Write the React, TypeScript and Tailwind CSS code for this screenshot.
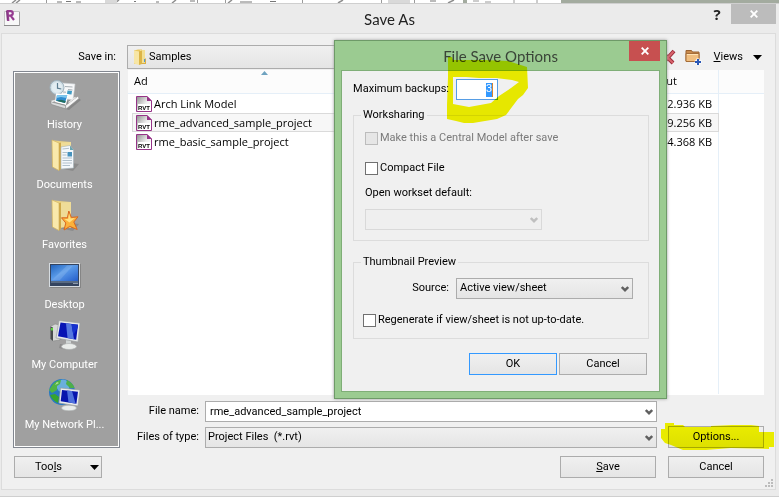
import type { ReactNode } from "react";

const files = [
    { name: "Arch Link Model", size: "12.936 KB", selected: false },
    { name: "rme_advanced_sample_project", size: "29.256 KB", selected: true },
    { name: "rme_basic_sample_project", size: "24.368 KB", selected: false },
];

const buttonClass =
    "h-[22px] border border-[#acacac] bg-linear-to-b from-[#f0f0f0] to-[#e5e5e5] text-center";

function Chevron({ color = "#606060" }: { color?: string }) {
    return (
        <svg className="pointer-events-none absolute right-1 top-[7px] h-2 w-2" viewBox="0 0 8 8">
            <path d="M0.8 2 L4 5.2 L7.2 2" fill="none" stroke={color} strokeWidth="2.4" />
        </svg>
    );
}

function Cross() {
    return (
        <svg className="h-2 w-2" viewBox="0 0 8 8">
            <path d="M0.7 0.7 L7.3 7.3 M7.3 0.7 L0.7 7.3" stroke="#fff" strokeWidth="1.9" />
        </svg>
    );
}

function DownTriangle() {
    return (
        <svg className="h-[5px] w-[9px]" viewBox="0 0 9 5">
            <path d="M0 0 H9 L4.5 5 Z" fill="#000" />
        </svg>
    );
}

// Revit logo on a small sheet
function RevitIcon() {
    return (
        <svg className="h-[18px] w-[17px]" viewBox="0 0 17 18">
            <path d="M0.5 2.5 H15.5 V16.5 H0.5 Z" fill="#f8f8f8" stroke="#c4c4c4" />
            <path d="M0 16.5 H16" stroke="#8c8c8c" />
            <path d="M15.5 3 V17" stroke="#a5a5a5" />
            <path
                d="M4.3 12 L3.6 2.2 H6.4 C9.4 2 9.6 6 6.8 6.4 L4.8 6.6 M6.6 6.6 L10 11"
                fill="none"
                stroke="#963c91"
                strokeWidth="2.2"
            />
            <path d="M2.5 2 L3.3 11.5" stroke="#6f2a6e" strokeWidth="0.8" />
        </svg>
    );
}

function RvtIcon() {
    return (
        <svg className="h-4 w-4 shrink-0" viewBox="0 0 16 16">
            <defs>
                <linearGradient id="sheet" x1="0" y1="0" x2="1" y2="0.8">
                    <stop offset="0" stopColor="#8c8c8c" />
                    <stop offset="0.6" stopColor="#efefef" />
                    <stop offset="1" stopColor="#fff" />
                </linearGradient>
            </defs>
            <path d="M0.5 0.5 H11 L15.5 5 V15.5 H0.5 Z" fill="url(#sheet)" stroke="#963488" />
            <path d="M11 0 L16 5 H11 Z" fill="#963488" />
            <rect x="2" y="8" width="13" height="7" fill="#fff" />
            <text x="2" y="14" fontFamily="Liberation Sans" fontWeight="bold" fontSize="6" fill="#000">
                RVT
            </text>
        </svg>
    );
}

function SmallFolder() {
    return (
        <svg className="h-4 w-[14px] shrink-0" viewBox="0 0 14 16">
            <path d="M1 1.5 L5 0.5 H9 V15 H1 Z" fill="#e9c860" />
            <path d="M7 1 H12 V14.5 H7 Z" fill="#f2df93" />
            <path d="M1 1.5 L6 2.5 V16 L1 14.5 Z" fill="#f7e6a5" />
            <path d="M6 2.5 L9 1.5 V15 L6 16 Z" fill="#dcb548" />
            <path d="M12 9 L13 10 V15 H9 V14 H12 Z" fill="#d8ae45" />
            <rect x="11" y="10" width="1" height="3" fill="#4f97d8" />
        </svg>
    );
}

function DeleteIcon() {
    return (
        <svg className="h-4 w-4" viewBox="0 0 16 16">
            <path d="M2 3 L13 14 M14 2 L3 14" stroke="#9c2b3a" strokeWidth="4" />
            <path d="M2.5 3.5 L13 14 M13.5 2.5 L3.5 13.5" stroke="#d9646c" strokeWidth="2" />
        </svg>
    );
}

function NewFolderIcon() {
    return (
        <svg className="h-4 w-[17px]" viewBox="0 0 17 16">
            <path d="M1 3 V1.5 H6.5 L7.5 3 H14 V12 H1 Z" fill="#c98a4c" stroke="#9a6230" />
            <path d="M1 4.5 H14 V12.5 H1 Z" fill="#f1bf80" stroke="#a56d38" />
            <path d="M2 5.5 H13" stroke="#ffe2b4" />
            <path d="M13 9.5 V16 M9.8 12.8 H16.5" stroke="#fff" strokeWidth="3.2" />
            <path d="M13 10 V16 M10 13 H16" stroke="#2b58b5" strokeWidth="2" />
        </svg>
    );
}

function FolderShape() {
    return (
        <>
            <path d="M10 29 L24 32 L30 25 L22 24 Z" fill="#7d7d7d" opacity="0.6" />
            <path d="M5 1.5 L16 2.5 L22 3 V29 L7 27 Z" fill="#e8d083" />
            <path d="M11 3.5 L22 3 V27 L11 29 Z" fill="#efdc98" />
            <path d="M3 1 L10 4 V31.5 L3.5 28 Z" fill="#f9e9ab" stroke="#d5b65f" strokeWidth="0.7" />
            <path d="M10 4 L12 3.5 V30 L10 31.5 Z" fill="#cfa94a" />
        </>
    );
}

function HistoryIcon() {
    return (
        <svg className="h-8 w-8" viewBox="0 0 32 32">
            <path d="M8 27 L20 31 L32 21 L28 18 Z" fill="#777" opacity="0.6" />
            <path d="M13 4 L26 5 L24 21 L12 19 Z" fill="#f7f8f9" stroke="#cbd0d3" strokeWidth="0.6" />
            <path d="M16 7.5 L23.5 8 M19 10.5 L23.5 11 M14 13 L17 13.2 M14 15.3 L17 15.5" stroke="#a8b0b5" />
            <path d="M18.5 11.5 L23 12 L22.5 15.5 L18 15 Z" fill="#3f9bc4" />
            <circle cx="8" cy="8.5" r="7" fill="#d2e0e7" stroke="#9fb2bd" />
            <circle cx="8" cy="8.5" r="5.3" fill="#e2edf2" />
            <path d="M8.5 4 V9.2 L12.3 10" fill="none" stroke="#5e7e91" strokeWidth="1.2" />
            <path d="M7 14.5 L19.5 15 L17 26 L6 23 Z" fill="#fff" />
            <path d="M8 16 L18.3 16.3 L16 24 L7 21.8 Z" fill="#2f8bcf" />
            <path d="M8 16 L18.3 16.3 L17.5 19 L12 18 L7.6 19 Z" fill="#81c9ef" />
            <path d="M7 21.8 L12 20.8 L16.8 22 L16 24 Z" fill="#246f5e" />
            <path d="M1 22.5 L16.5 26.5 L17 30 L2.5 25.5 Z" fill="#d9dbdc" stroke="#858585" strokeWidth="0.6" />
            <path d="M16.5 26.5 L29 17 L30 19.5 L17 30 Z" fill="#f6f6f6" stroke="#909090" strokeWidth="0.6" />
            <path d="M2.5 22.5 L6 21.5 M19.5 23.5 L26.5 18.3" stroke="#e8e8e8" strokeWidth="1.4" />
        </svg>
    );
}

function DocumentsIcon() {
    return (
        <svg className="h-8 w-8" viewBox="0 0 32 32">
            <FolderShape />
            <path d="M12 8 L21 6.5 L24.5 11 V29 L12 30 Z" fill="#f4f8fb" stroke="#a5b1b8" strokeWidth="0.6" />
            <path d="M21 6.5 L21 11 H24.5 Z" fill="#6ca5b0" />
            <path d="M13.5 10 L20 9.3 M13.5 13.5 H18 M13.5 16 H17.5 M13.5 19 H23 M13.5 21.5 H23 M13.5 24 H23 M13.5 26.5 H21" stroke="#a9b9c5" strokeWidth="0.9" />
            <rect x="18.5" y="13" width="4.5" height="4.5" fill="#4692bd" />
        </svg>
    );
}

function FavoritesIcon() {
    return (
        <svg className="h-8 w-8" viewBox="0 0 32 32">
            <FolderShape />
            <path
                d="M19.8 12 L22.4 18.4 L29 17.8 L24.8 23 L28.2 30.5 L20.8 27.4 L15 31 L16.8 24 L12.5 18.8 L18.4 18.8 Z"
                fill="#fcb13b"
                stroke="#d86721"
            />
            <path d="M20 14.5 L21.5 19.5 L26 19 L20.5 23.5 L15.5 20 L19.2 20 Z" fill="#ffe183" />
        </svg>
    );
}

function DesktopIcon() {
    return (
        <svg className="h-8 w-8" viewBox="0 0 32 32">
            <defs>
                <linearGradient id="desk" x1="0" y1="0" x2="1" y2="1">
                    <stop offset="0" stopColor="#2264bd" />
                    <stop offset="0.45" stopColor="#5a9be9" />
                    <stop offset="1" stopColor="#245dcb" />
                </linearGradient>
            </defs>
            <rect x="1" y="5" width="31" height="24" fill="#858585" />
            <rect x="0.5" y="4.5" width="30" height="23" fill="#34445f" stroke="#d6dce1" />
            <rect x="2" y="6" width="27" height="16" fill="url(#desk)" />
            <path d="M3 21 L18 6.5 H24 L11 21 Z" fill="#fff" opacity="0.13" />
            <path d="M2 23 H29" stroke="#697b92" strokeWidth="1.4" />
            <path d="M24 24.5 H29" stroke="#8c9aae" />
        </svg>
    );
}

function Monitor() {
    return (
        <>
            <path d="M11 25 L22 26 L25 30 L18 31 L10 29 Z" fill="#777" opacity="0.5" />
            <path d="M17 20 H22 V28 H17 Z" fill="#cfd4d4" />
            <ellipse cx="20" cy="27.5" rx="7.5" ry="3" fill="#e9ecea" stroke="#b0b5b5" strokeWidth="0.7" />
        </>
    );
}

function ComputerIcon() {
    return (
        <svg className="h-8 w-8" viewBox="0 0 32 32">
            <path d="M1.5 7.5 L6 5 L11 6 V21 L4 22 L1.5 20 Z" fill="#d6d8d6" stroke="#888" strokeWidth="0.6" />
            <path d="M1.5 7.5 L4 8.5 V22 L1.5 20 Z" fill="#484b4d" />
            <rect x="2" y="9" width="2" height="2.5" fill="#58d13b" />
            <Monitor />
            <path d="M10 1.5 L31 4 L29 23 L7 19 Z" fill="#e7e9e9" stroke="#9a9fa0" strokeWidth="0.7" />
            <path d="M11.5 3.5 L29 5.7 L27.2 20.7 L9 17.3 Z" fill="#0814b4" />
            <path d="M17 4.2 L22.5 4.9 L25 20.3 L18.5 19.1 Z" fill="#5577e0" />
            <path d="M22.5 4.9 L29 5.7 L28.6 9 L24.3 16 Z" fill="#1632ce" />
        </svg>
    );
}

function NetworkIcon() {
    return (
        <svg className="h-8 w-8" viewBox="0 0 32 32">
            <circle cx="14" cy="13" r="13" fill="#2878c1" />
            <circle cx="15" cy="7" r="6.5" fill="#84c6e6" opacity="0.7" />
            <path d="M5 5 Q9 1 13 1 L12 5 L9 7 L9 11 L4 14 L1 11 Z" fill="#51b345" />
            <path d="M19 1 Q25 4 26.5 9 L22 9 L18 5 Z" fill="#4daf48" />
            <path d="M2 16 L7 15 L11 18 L10 24 Q5 22 2 16 Z" fill="#36a52e" />
            <path d="M7 6 L9 3 L11 4 Z" fill="#b8e498" />
            <ellipse cx="21" cy="29" rx="7.5" ry="2.8" fill="#e9ecea" stroke="#b0b5b5" strokeWidth="0.7" />
            <path d="M12.5 9 L32 11 L30 27 L11 24 Z" fill="#e9ebec" stroke="#9a9fa0" strokeWidth="0.7" />
            <path d="M14 11 L30 12.7 L28.4 24.8 L12.7 22.3 Z" fill="#0715ad" />
            <path d="M19 11.6 L24 12.1 L27.5 24.6 L20.5 23.5 Z" fill="#4d70dc" />
        </svg>
    );
}

const places: { label: string; icon: ReactNode }[] = [
    { label: "History", icon: <HistoryIcon /> },
    { label: "Documents", icon: <DocumentsIcon /> },
    { label: "Favorites", icon: <FavoritesIcon /> },
    { label: "Desktop", icon: <DesktopIcon /> },
    { label: "My Computer", icon: <ComputerIcon /> },
    { label: "My Network Pl...", icon: <NetworkIcon /> },
];

// sliver of the application toolbar behind the window
function ToolbarStrip() {
    return (
        <div className="flex h-[3px] bg-white">
            <svg className="h-[3px] w-[463px]" viewBox="0 0 463 3">
                <path
                    d="M12 3 L16 0 M16 3 L20 0 M115 3 L119 0 M172 3 L176 0 M228 3 L232 0 M338 3 L343 0 M448 3 L454 0"
                    stroke="#8f8f8f"
                    strokeWidth="1.5"
                />
                <path d="M57 2 H62 M66 1.5 H71 M76 2 H81 M134 1.5 H136 M156 2 H159 M190 1 H195 M240 2 H252 M270 1.5 H276 M430 1 H436" stroke="#777" />
                <path d="M105 0 H117 V3 H105 Z M388 0 H410 V3 H388 Z" fill="#d9d9d9" />
                <path d="M46.5 0 V3 M197.5 0 V3 M225.5 0 V3 M302.5 0 V3 M381.5 0 V3 M414.5 0 V3" stroke="#9a9a9a" />
            </svg>
            <div className="w-1 bg-[#a3ab9f]" />
            <svg className="h-[3px] w-[94px]" viewBox="0 0 94 3">
                <path d="M6 1 H12 M18 2 H24 M47 0 V3 M70 0 V3" stroke="#9a9a9a" />
            </svg>
            <div className="flex-1 bg-[#a3ab9f]" />
        </div>
    );
}

function PlacesBar() {
    return (
        <nav className="flex flex-col border border-[#828790] bg-white p-px">
            <div className="flex flex-1 flex-col items-center bg-[#a0a0a0] pr-1 pt-[6px] text-white">
                {places.map((p) => (
                    <a key={p.label} href="#" className="flex h-[60px] flex-col items-center">
                        {p.icon}
                        <span className="mt-[6px] whitespace-nowrap leading-4">{p.label}</span>
                    </a>
                ))}
            </div>
        </nav>
    );
}

function FileList() {
    return (
        <div className="relative h-[325px] bg-white font-['Open_Sans','Noto_Sans',sans-serif]">
            <table className="w-full table-fixed border-separate border-spacing-0">
                <colgroup>
                    <col className="w-1" />
                    <col />
                    <col className="w-[80px]" />
                    <col className="w-[45px]" />
                </colgroup>
                <thead>
                    <tr className="h-6 bg-[#fcfcfc] text-left">
                        <th className="border-b border-[#e5eff8]" />
                        <th className="border-b border-[#e5eff8] pl-[2px] font-normal">Ad</th>
                        <th className="border-b border-r border-[#e5eff8] pl-2 font-normal">Boyut</th>
                        <th className="border-b border-[#e5eff8]" />
                    </tr>
                </thead>
                <tbody>
                    {files.map((f) => (
                        <tr key={f.name} className="h-[19px]">
                            <td />
                            <td className={f.selected ? "border border-r-0 border-[#dadada] bg-[#f7f7f7] p-0 pl-[3px]" : "p-0 pl-1"}>
                                <div className="flex items-center gap-[2px] leading-4">
                                    <RvtIcon />
                                    {f.name}
                                </div>
                            </td>
                            <td
                                className={
                                    f.selected
                                        ? "border border-l-0 border-[#dadada] bg-[#f7f7f7] p-0 pr-1.5 text-right leading-4"
                                        : "border-r border-[#e5eff8] p-0 pr-1.5 text-right leading-4"
                                }
                            >
                                {f.size}
                            </td>
                            <td />
                        </tr>
                    ))}
                    <tr className="h-[243px]">
                        <td />
                        <td />
                        <td className="border-r border-[#e5eff8]" />
                        <td />
                    </tr>
                </tbody>
            </table>
            <svg className="absolute left-[133px] top-px h-1 w-[7px]" viewBox="0 0 7 4">
                <path d="M0 4 L3.5 0 L7 4 Z" fill="#6fa3c0" />
            </svg>
        </div>
    );
}

function SaveOptionsDialog() {
    return (
        <section
            role="dialog"
            aria-labelledby="options-title"
            className="absolute left-[334px] top-10 w-[333px] border border-[#6e9a68] bg-[#9bcb91] px-[6px] pb-[6px] shadow-[0_0_3px_#999]"
        >
            <header className="relative flex h-[29px] items-center justify-center">
                <h2 id="options-title" className="font-['Lato',sans-serif] text-[15px] leading-5 text-[#3a4438]">
                    File Save Options
                </h2>
                <button aria-label="Close options" className="absolute right-0 top-0 flex h-5 w-[31px] items-center justify-center bg-[#c75050]">
                    <Cross />
                </button>
            </header>
            <div className="border border-[#7fae77] bg-[#f0f0f0] pb-4 pl-[11px] pr-[10px] pt-2">
                <div className="flex items-center">
                    <label htmlFor="backups" className="w-24 whitespace-nowrap text-right">
                        Maximum backups:
                    </label>
                    <div className="relative ml-[7px] flex h-[21px] w-[42px] items-center justify-end border border-[#569de5] bg-white pr-1">
                        <input
                            id="backups"
                            defaultValue="3"
                            className="h-[14px] w-[7px] border-r border-[#d9822b] bg-[#3399ff] p-0 text-right text-white outline-none"
                        />
                    </div>
                </div>

                <fieldset className="mt-[7px] h-[134px] border border-[#dcdcdc] px-[11px]">
                    <legend className="-ml-1 px-[2px] leading-4">Worksharing</legend>
                    <label className="mt-2 flex items-center gap-[2px] leading-[14px] text-[#7a7a7a]">
                        <input type="checkbox" disabled className="size-[13px] appearance-none border border-[#bcbcbc] bg-[#e6e6e6]" />
                        Make this a Central Model after save
                    </label>
                    <label className="mt-4 flex items-center gap-[2px] leading-[14px]">
                        <input type="checkbox" className="size-[13px] appearance-none border border-[#707070] bg-white" />
                        Compact File
                    </label>
                    <label htmlFor="workset" className="mt-[10px] block leading-4">
                        Open workset default:
                    </label>
                    <div className="relative mt-2 w-[177px]">
                        <select id="workset" disabled className="block h-[21px] w-full appearance-none border border-[#d9d9d9] bg-[#efefef] px-[3px]" />
                        <Chevron color="#bfbfbf" />
                    </div>
                </fieldset>

                <fieldset className="mt-[13px] h-[85px] border border-[#dcdcdc] px-[9px]">
                    <legend className="-ml-[2px] px-[2px] leading-4">Thumbnail Preview</legend>
                    <div className="mt-2 flex items-center">
                        <label htmlFor="source" className="w-[86px] text-right">
                            Source:
                        </label>
                        <div className="relative ml-[7px] w-[177px]">
                            <select
                                id="source"
                                className="block h-[21px] w-full appearance-none border border-[#acacac] bg-linear-to-b from-[#f0f0f0] to-[#e5e5e5] px-[3px]"
                            >
                                <option>Active view/sheet</option>
                            </select>
                            <Chevron />
                        </div>
                    </div>
                    <label className="mt-[14px] flex items-center gap-[2px] leading-[14px]">
                        <input type="checkbox" className="size-[13px] appearance-none border border-[#707070] bg-white" />
                        Regenerate if view/sheet is not up-to-date.
                    </label>
                </fieldset>

                <div className="mt-[14px] flex justify-end gap-[2px] pr-[2px]">
                    <button className="h-[22px] w-[88px] border border-[#3399ff] bg-linear-to-b from-[#f0f0f0] to-[#e5e5e5]">OK</button>
                    <button className={`${buttonClass} w-[88px]`}>Cancel</button>
                </div>
            </div>
        </section>
    );
}

// yellow felt-pen marks round the backups box and the Options button
function Marker() {
    return (
        <>
            <svg className="pointer-events-none absolute left-[446px] top-[57px] h-[68px] w-[84px] mix-blend-multiply" viewBox="0 0 84 68">
                <path
                    fillRule="evenodd"
                    d="M2 0 L6 0 L7 3 H38 L62 4 L81 10 L82 31 L77 38 L72 42 L60 58 L51 62 L27 66 H18 L10 64 L1 62 V48 L2 20 Z M7 20 V47 L23 50 L45 46 L53 39 L65 31 L73 25 L66 23 L50 21 L33 21 L20 20 Z"
                    fill="#f5f600"
                />
            </svg>
            <svg className="pointer-events-none absolute right-[4px] top-[423px] h-[28px] w-[114px] mix-blend-multiply" viewBox="0 0 114 28">
                <path
                    d="M4 0 H13 V2 H22 L24 4 H50 V3 L71 2 H90 L98 3 V9 H113 V24 H108 V26 L70 25 L45 27 H22 L10 22 L4 20 L0 15 V6 H4 Z"
                    fill="#f8fa00"
                />
            </svg>
        </>
    );
}

export default function App() {
    return (
        <main className="relative w-full bg-white pb-[2px] font-['Roboto',sans-serif] text-[11px] text-black">
            <ToolbarStrip />
            <section className="border-b border-t border-[#cfcfcf] bg-[#ebebeb] px-px pb-[6px]">
                <header className="relative flex h-[29px] items-center justify-center">
                    <span className="absolute left-[3px] top-[5px]">
                        <RevitIcon />
                    </span>
                    <h1 className="font-['Lato',sans-serif] text-[15px] leading-5 text-[#222]">Save As</h1>
                    <div className="absolute right-[2px] top-0 flex">
                        <button aria-label="Help" className="h-5 w-7 font-['Open_Sans',sans-serif] text-[15px] font-bold leading-5 text-[#222]">
                            ?
                        </button>
                        <button aria-label="Close" className="flex h-5 w-[45px] items-center justify-center bg-[#bcbcbc]">
                            <Cross />
                        </button>
                    </div>
                </header>

                <div className="relative mr-[2px] border border-[#dcdcdc] bg-[#f0f0f0] px-[11px] pb-[11px] pt-[11px]">
                    <div className="flex h-6 items-center">
                        <label htmlFor="folder" className="w-[107px] pr-1 text-right">
                            Save in:
                        </label>
                        <div className="relative ml-[7px] flex-1">
                            <span className="pointer-events-none absolute left-[6px] top-1">
                                <SmallFolder />
                            </span>
                            <select
                                id="folder"
                                className="block h-6 w-full appearance-none border border-[#acacac] bg-linear-to-b from-[#f0f0f0] to-[#e5e5e5] pl-[21px]"
                            >
                                <option>Samples</option>
                            </select>
                        </div>
                        <div className="flex w-[180px] items-center justify-end gap-[9px] pr-[2px]">
                            <button aria-label="Delete">
                                <DeleteIcon />
                            </button>
                            <button aria-label="New folder">
                                <NewFolderIcon />
                            </button>
                            <button className="ml-[3px] flex items-center gap-[10px]">
                                <span>
                                    <u>V</u>iews
                                </span>
                                <DownTriangle />
                            </button>
                        </div>
                    </div>

                    <div className="mt-px grid grid-cols-[107px_1fr] gap-x-2">
                        <div className="mt-px grid">
                            <PlacesBar />
                        </div>
                        <div>
                            <FileList />
                            <div className="mt-[6px] flex items-center">
                                <label htmlFor="filename" className="w-[71px] text-right">
                                    File name:
                                </label>
                                <div className="relative ml-[6px] mr-[107px] flex-1">
                                    <input
                                        id="filename"
                                        defaultValue="rme_advanced_sample_project"
                                        className="block h-[21px] w-full border border-[#acacac] bg-white px-1 outline-none"
                                    />
                                    <Chevron />
                                </div>
                            </div>
                            <div className="mt-1 flex items-center">
                                <label htmlFor="filetype" className="w-[71px] text-right">
                                    Files of type:
                                </label>
                                <div className="relative ml-[6px] flex-1">
                                    <select
                                        id="filetype"
                                        className="block h-[21px] w-full appearance-none border border-[#acacac] bg-linear-to-b from-[#f0f0f0] to-[#e5e5e5] px-[2px]"
                                    >
                                        <option>Project Files&nbsp; (*.rvt)</option>
                                    </select>
                                    <Chevron />
                                </div>
                                <button className={`${buttonClass} ml-[11px] w-24`}>Options...</button>
                            </div>
                        </div>
                    </div>

                    <div className="mt-2 flex gap-3 pl-px">
                        <button className={`${buttonClass} mr-auto flex w-[88px] items-center justify-end gap-7 pr-[2px]`}>
                            <span>
                                Too<u>l</u>s
                            </span>
                            <DownTriangle />
                        </button>
                        <button className={`${buttonClass} w-24`}>
                            <u>S</u>ave
                        </button>
                        <button className={`${buttonClass} w-24`}>Cancel</button>
                    </div>

                    <svg className="absolute bottom-[2px] right-[2px] h-2 w-2" viewBox="0 0 8 8">
                        <path d="M6 0 H8 V2 H6 Z M3 3 H5 V5 H3 Z M6 3 H8 V5 H6 Z M0 6 H2 V8 H0 Z M3 6 H5 V8 H3 Z M6 6 H8 V8 H6 Z" fill="#bcbcbc" />
                    </svg>
                </div>
            </section>

            <SaveOptionsDialog />
            <Marker />
        </main>
    );
}
